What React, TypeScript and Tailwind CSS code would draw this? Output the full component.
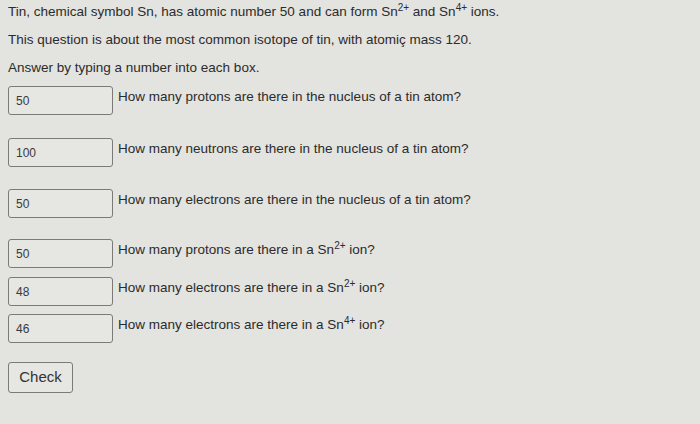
import React from "react";

const Sup = ({ children }: { children: React.ReactNode }) => (
  <sup className="text-[10px] relative -top-[5px]">{children}</sup>
);

const rows: { value: string; q: React.ReactNode; mt: string }[] = [
  { value: "50", q: <>How many protons are there in the nucleus of a tin atom?</>, mt: "mt-0" },
  { value: "100", q: <>How many neutrons are there in the nucleus of a tin atom?</>, mt: "mt-[23px]" },
  { value: "50", q: <>How many electrons are there in the nucleus of a tin atom?</>, mt: "mt-[22px]" },
  { value: "50", q: <>How many protons are there in a Sn<Sup>2+</Sup> ion?</>, mt: "mt-[21px]" },
  { value: "48", q: <>How many electrons are there in a Sn<Sup>2+</Sup> ion?</>, mt: "mt-[9px]" },
  { value: "46", q: <>How many electrons are there in a Sn<Sup>4+</Sup> ion?</>, mt: "mt-[8px]" },
];

export default function App() {
  return (
    <div
      className="w-[700px] h-[424px] bg-[#e3e3df] text-[#2b2b2b] text-[13.5px] px-2 pt-[4px] overflow-hidden"
      style={{ fontFamily: '"Liberation Sans", Arial, sans-serif' }}
    >
      <p className="leading-[16px]">
        Tin, chemical symbol Sn, has atomic number 50 and can form Sn<Sup>2+</Sup> and Sn
        <Sup>4+</Sup> ions.
      </p>
      <p className="leading-[16px] mt-[12px]">
        This question is about the most common isotope of tin, with atomiç mass 120.
      </p>
      <p className="leading-[16px] mt-[12px]">Answer by typing a number into each box.</p>

      <div className="mt-[10px] flex flex-col">
        {rows.map((r, i) => (
          <div key={i} className={`flex items-start ${r.mt}`}>
            <div className="w-[105px] h-[29px] border border-[#7a7a78] rounded-[3px] bg-[#e6e6e2] flex items-center pl-[7px] text-[12px] text-[#3a3a3a] shrink-0">
              {r.value}
            </div>
            <div className="pl-[5px] pt-[3px] leading-[16px]">{r.q}</div>
          </div>
        ))}
      </div>

      <button className="mt-[19px] w-[65px] h-[31px] border border-[#7a7a78] rounded-[3px] bg-[#e6e6e2] text-[15px] text-[#333]">
        Check
      </button>
    </div>
  );
}
